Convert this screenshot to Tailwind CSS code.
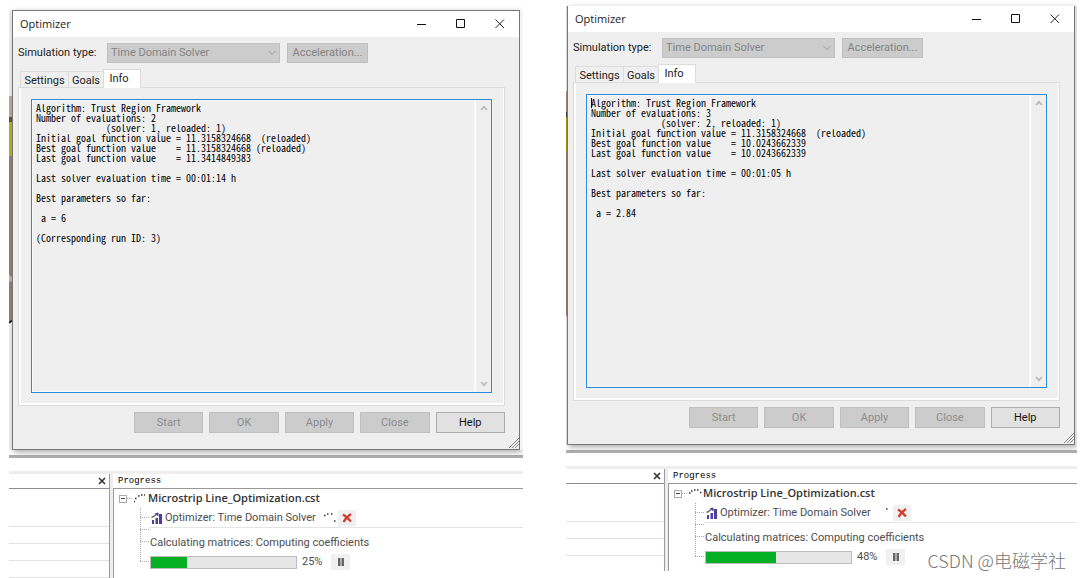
<!DOCTYPE html>
<html lang="en">
<head>
<meta charset="utf-8">
<title>Optimizer</title>
<script src="https://cdn.jsdelivr.net/npm/@tailwindcss/browser@4"></script>
</head>
<body class="min-h-screen bg-white font-[Roboto,'Noto_Sans_CJK_SC',sans-serif] text-[11px] text-[#222]">
<svg class="hidden" aria-hidden="true">
  <symbol id="min" viewBox="0 0 10 10"><path d="M0 5.5h9" stroke="#111" fill="none"/></symbol>
  <symbol id="max" viewBox="0 0 10 10"><path d="M.5 .5h8v8h-8z" stroke="#111" fill="none"/></symbol>
  <symbol id="close" viewBox="0 0 10 10"><path d="M.5 .5l8.500 8.500M9 .5L.5 9" stroke="#222" fill="none"/></symbol>
  <symbol id="up" viewBox="0 0 8 6"><path d="M1 5l3-3.200L7 5" stroke="#bbb" stroke-width="1.800" fill="none"/></symbol>
  <symbol id="down" viewBox="0 0 8 6"><path d="M1 1l3 3.200L7 1" stroke="#bbb" stroke-width="1.800" fill="none"/></symbol>
  <symbol id="chev" viewBox="0 0 8 6"><path d="M.5 1l3.500 3.500L7.500 1" stroke="#999" fill="none"/></symbol>
  <symbol id="grip" viewBox="0 0 10 10"><path d="M0 10L10 0M3 10l7-7M6 10l4-4" stroke="#888" fill="none"/></symbol>
  <symbol id="panex" viewBox="0 0 8 8"><path d="M1 1l6 6M7 1L1 7" stroke="#333" stroke-width="1.600" fill="none"/></symbol>
  <symbol id="redx" viewBox="0 0 10 10"><path d="M1 1.500Q5 4 9 8.500M9 1Q4 4 1.500 9" stroke="#d33a2c" stroke-width="2.200" fill="none"/></symbol>
  <symbol id="pause" viewBox="0 0 8 8"><path d="M1 0h2.500v8H1zM4.500 0h2.500v8H4.500z" fill="#666"/></symbol>
  <symbol id="chart" viewBox="0 0 12 12"><path d="M1 8h2v4H1zM4.500 6h2.500v6H4.500zM8 2h3v10H8z" fill="#4a3f9c"/><path d="M.5 5.500Q3 4.500 5 2.500" stroke="#666" stroke-width="1.500" fill="none"/><path d="M3.500 1.500L7.500 .5v4z" fill="#4a3f9c"/></symbol>
  <symbol id="tee" viewBox="0 0 9 20"><path d="M.5 0v20M0 9.500h9" stroke="#aaa" stroke-dasharray="1 1" fill="none"/></symbol>
  <symbol id="tee2" viewBox="0 0 9 24"><path d="M.5 0v24M0 1.500h9M0 13.500h9" stroke="#aaa" stroke-dasharray="1 1" fill="none"/></symbol>
  <symbol id="ell" viewBox="0 0 9 20"><path d="M.5 0v9.500M0 9.500h9" stroke="#aaa" stroke-dasharray="1 1" fill="none"/></symbol>
</svg>

<main class="grid grid-cols-[514fr_511fr] items-start gap-[43px] pl-[9px] pr-[3px]">

  <section class="overflow-hidden pt-[10px]" aria-label="First run">
    <div class="flex">
      <svg class="h-[440px] w-[3px] shrink-0" viewBox="0 0 3 440" aria-hidden="true"><path d="M0 0h3v440H0z" fill="#f0f0f0"/><path d="M0 86h3v21H0z" fill="#c5a6a2"/><path d="M0 107h3v5H0z" fill="#555"/><path d="M0 112h3v34H0z" fill="#b9b51c"/><path d="M0 146h3v165l-3 2z" fill="#93827e"/><path d="M0 265l3 2v5l-3-1z" fill="#d3a9a5"/><path d="M0 313l3-2.500" stroke="#000" stroke-width="1.500"/></svg>
      <div class="min-w-0 flex-1 border border-[#777] bg-[#efefef] shadow-[2px_2px_6px_rgba(0,0,0,0.35)]">
        <header class="flex h-[26px] items-center bg-white pl-[7px] pr-[14px]">
          <h1 class="flex-1 font-['Open_Sans',sans-serif] text-[11px]">Optimizer</h1>
          <div class="flex gap-[29px]">
            <button aria-label="Minimize"><svg class="size-[10px]"><use href="#min"/></svg></button>
            <button aria-label="Maximize"><svg class="size-[10px]"><use href="#max"/></svg></button>
            <button aria-label="Close window"><svg class="size-[10px]"><use href="#close"/></svg></button>
          </div>
        </header>
        <div class="pb-[15px] pl-[5px] pr-[14px] pt-[6px]">
          <div class="flex h-5 items-center">
            <label for="sim1" class="w-[89px] pt-px">Simulation type:</label>
            <div class="relative h-5 w-[173px]">
              <select id="sim1" disabled class="h-full w-full appearance-none border border-[#c0c0c0] bg-[#ccc] pl-[3px] pt-px text-[#838383] opacity-100"><option>Time Domain Solver</option></select>
              <svg class="absolute right-1 top-[7px] h-[6px] w-2"><use href="#chev"/></svg>
            </div>
            <button disabled class="ml-[7px] h-5 w-[81px] border border-[#bfbfbf] bg-[#ccc] pt-px text-[#838383]">Acceleration...</button>
          </div>
          <div class="relative z-10 -mb-px mt-[6px] flex items-end pl-[2px]" role="tablist">
            <button role="tab" class="h-[17px] w-[49px] border border-b-0 border-[#dcdcdc] pt-px leading-4">Settings</button>
            <button role="tab" class="h-[17px] w-[34px] border-t border-[#dcdcdc] pt-px leading-4">Goals</button>
            <button role="tab" aria-selected="true" class="h-[19px] w-[38px] border border-b-0 border-[#dcdcdc] bg-white pr-[6px] leading-4">Info</button>
          </div>
          <div class="border border-[#dcdcdc]">
            <div class="border-b-2 border-l-2 border-r border-white pb-[10px] pl-[10px] pr-[11px] pt-[11px]">
              <div class="flex h-[294px] border border-[#2e8bd8]">
                <textarea readonly aria-label="Optimizer info" class="min-w-0 flex-1 resize-none overflow-hidden whitespace-pre border border-[#f8f8f8] pl-[3px] pt-[2px] font-['Noto_Sans_Mono_CJK_SC','Liberation_Mono',monospace] text-[10px] leading-[10px] text-black outline-none">Algorithm: Trust Region Framework
Number of evaluations: 2
              (solver: 1, reloaded: 1)
Initial goal function value = 11.3158324668  (reloaded)
Best goal function value    = 11.3158324668 (reloaded)
Last goal function value    = 11.3414849383

Last solver evaluation time = 00:01:14 h

Best parameters so far:

 a = 6

(Corresponding run ID: 3)</textarea>
                <div class="flex w-4 flex-col items-center justify-between border-l border-white py-[5px]">
                  <button aria-label="Scroll up"><svg class="h-[6px] w-2"><use href="#up"/></svg></button>
                  <button aria-label="Scroll down"><svg class="h-[6px] w-2"><use href="#down"/></svg></button>
                </div>
              </div>
            </div>
          </div>
          <div class="ml-auto mt-[6px] grid w-[371px] grid-cols-5 gap-[6px]">
            <button disabled class="h-[21px] border border-[#bfbfbf] bg-[#ccc] pt-px text-[#8c8c8c]">Start</button>
            <button disabled class="h-[21px] border border-[#bfbfbf] bg-[#ccc] pt-px text-[#8c8c8c]">OK</button>
            <button disabled class="h-[21px] border border-[#bfbfbf] bg-[#ccc] pt-px text-[#8c8c8c]">Apply</button>
            <button disabled class="h-[21px] border border-[#bfbfbf] bg-[#ccc] pt-px text-[#8c8c8c]">Close</button>
            <button class="h-[21px] border border-[#adadad] bg-[#e1e1e1] pt-px text-[#111]">Help</button>
          </div>
        </div>
        <svg class="-mt-[10px] ml-auto size-[10px]"><use href="#grip"/></svg>
      </div>
      <div class="w-[3px] shrink-0 bg-[#f4f4f4]"></div>
    </div>
    <div class="mt-[5px] h-[3px] bg-[#b0b0b0]"></div>
    <div class="mt-[13px] h-[3px] bg-[#eee]"></div>
    <div class="flex">
      <aside class="w-[101px] border-r border-[#9a9aa4]" aria-label="Parameters">
        <div class="flex h-[14px] items-center justify-end pr-[3px]"><button aria-label="Close pane"><svg class="size-2"><use href="#panex"/></svg></button></div>
        <div class="border-t border-[#888c94]">
          <div class="h-[38px] border-b border-[#e2e2e2]"></div>
          <div class="h-[17px] border-b border-[#e2e2e2]"></div>
          <div class="h-[17px] border-b border-[#e2e2e2]"></div>
          <div class="h-[17px] border-b border-[#e2e2e2]"></div>
        </div>
      </aside>
      <div class="w-[3px] bg-[#eee]"></div>
      <section class="min-w-0 flex-1" aria-label="Progress">
        <h2 class="h-[14px] pl-[5px] font-['Liberation_Mono',monospace] text-[9px] leading-[15px] text-black">Progress</h2>
        <div class="border-l border-t border-[#999] pb-2 text-[#4d4d4d]">
          <div class="flex h-[19px] items-center pl-[5px]">
            <button aria-label="Collapse" class="grid size-[8px] place-items-center border border-[#aaa]"><span class="h-px w-1 bg-[#444]"></span></button>
            <span class="w-[5px] border-t border-dotted border-[#aaa]"></span>
            <svg class="h-[12px] w-[16px]" viewBox="0 0 16 12" aria-hidden="true"><path d="M2 8.500h1M3 5.500h1.500M6 3h1.500M9 2h1.500M12 2h1" stroke="#333" stroke-width="1.500"/></svg>
            <strong class="font-['Open_Sans',sans-serif] font-semibold text-[#333]">Microstrip Line_Optimization.cst</strong>
          </div>
          <div class="flex h-5 items-center pl-[26px]">
            <svg class="h-5 w-[9px] shrink-0"><use href="#tee"/></svg>
            <div class="flex h-full min-w-0 flex-1 items-center border-b border-[#e4e4e4] pl-[2px]">
              <svg class="size-3"><use href="#chart"/></svg>
              <span class="ml-[2px] w-[158px] whitespace-nowrap pt-[2px]">Optimizer: Time Domain Solver</span>
              <svg class="h-[12px] w-[15px]" viewBox="0 0 15 12" aria-hidden="true"><path d="M1 3.500h1.500M4 2h1.500M8 2h1.500M11 9h1.500" stroke="#333" stroke-width="1.500"/></svg>
              <button aria-label="Cancel" class="grid h-4 w-[18px] place-items-center bg-[#f0f0f0]"><svg class="size-[10px]"><use href="#redx"/></svg></button>
            </div>
          </div>
          <div class="flex h-6 items-center pl-[26px]">
            <svg class="h-6 w-[9px] shrink-0"><use href="#tee2"/></svg>
            <span class="whitespace-nowrap pl-px pt-[6px]">Calculating matrices: Computing coefficients</span>
          </div>
          <div class="flex h-5 items-center pl-[26px]">
            <svg class="h-5 w-[9px] shrink-0"><use href="#ell"/></svg>
            <div role="progressbar" aria-valuenow="25" aria-label="Run progress" class="ml-px h-[13px] w-[147px] border border-[#bcbcbc] bg-[#e6e6e6]"><div class="h-full bg-[#06b025]" style="width:25%"></div></div>
            <span class="ml-[5px] w-[29px] pt-px">25%</span>
            <button aria-label="Pause" class="grid h-4 w-[19px] place-items-center bg-[#f0f0f0]"><svg class="size-2"><use href="#pause"/></svg></button>
          </div>
        </div>
      </section>
    </div>
  </section>

  <section class="overflow-hidden pt-[6px]" aria-label="Second run">
    <div class="flex">
      <svg class="h-[439px] w-px shrink-0" viewBox="0 0 1 439" aria-hidden="true"><path d="M0 0h1v439H0z" fill="#e8e8e8"/><path d="M0 85h1v21H0z" fill="#a58c88"/><path d="M0 106h1v5H0z" fill="#444"/><path d="M0 111h1v34H0z" fill="#a09c18"/><path d="M0 145h1v165H0z" fill="#93827e"/></svg>
      <div class="min-w-0 flex-1 border border-t-0 border-[#777] bg-[#efefef] shadow-[2px_2px_6px_rgba(0,0,0,0.35)]">
        <header class="flex h-[26px] items-center bg-white pl-[7px] pr-[14px]">
          <h1 class="flex-1 font-['Open_Sans',sans-serif] text-[11px]">Optimizer</h1>
          <div class="flex gap-[29px]">
            <button aria-label="Minimize"><svg class="size-[10px]"><use href="#min"/></svg></button>
            <button aria-label="Maximize"><svg class="size-[10px]"><use href="#max"/></svg></button>
            <button aria-label="Close window"><svg class="size-[10px]"><use href="#close"/></svg></button>
          </div>
        </header>
        <div class="pb-[15px] pl-[5px] pr-[14px] pt-[6px]">
          <div class="flex h-5 items-center">
            <label for="sim2" class="w-[89px] pt-px">Simulation type:</label>
            <div class="relative h-5 w-[173px]">
              <select id="sim2" disabled class="h-full w-full appearance-none border border-[#c0c0c0] bg-[#ccc] pl-[3px] pt-px text-[#838383] opacity-100"><option>Time Domain Solver</option></select>
              <svg class="absolute right-1 top-[7px] h-[6px] w-2"><use href="#chev"/></svg>
            </div>
            <button disabled class="ml-[7px] h-5 w-[81px] border border-[#bfbfbf] bg-[#ccc] pt-px text-[#838383]">Acceleration...</button>
          </div>
          <div class="relative z-10 -mb-px mt-[6px] flex items-end pl-[2px]" role="tablist">
            <button role="tab" class="h-[17px] w-[49px] border border-b-0 border-[#dcdcdc] pt-px leading-4">Settings</button>
            <button role="tab" class="h-[17px] w-[34px] border-t border-[#dcdcdc] pt-px leading-4">Goals</button>
            <button role="tab" aria-selected="true" class="h-[19px] w-[38px] border border-b-0 border-[#dcdcdc] bg-white pr-[6px] leading-4">Info</button>
          </div>
          <div class="border border-[#dcdcdc]">
            <div class="border-b-2 border-l-2 border-r border-white pb-[10px] pl-[10px] pr-[11px] pt-[11px]">
              <div class="relative flex h-[294px] border border-[#2e8bd8]">
                <span class="absolute left-[4px] top-[3px] h-[10px] w-px bg-black" aria-hidden="true"></span>
                <textarea readonly aria-label="Optimizer info" class="min-w-0 flex-1 resize-none overflow-hidden whitespace-pre border border-[#f8f8f8] pl-[3px] pt-[2px] font-['Noto_Sans_Mono_CJK_SC','Liberation_Mono',monospace] text-[10px] leading-[10px] text-black outline-none">Algorithm: Trust Region Framework
Number of evaluations: 3
              (solver: 2, reloaded: 1)
Initial goal function value = 11.3158324668  (reloaded)
Best goal function value    = 10.0243662339
Last goal function value    = 10.0243662339

Last solver evaluation time = 00:01:05 h

Best parameters so far:

 a = 2.84</textarea>
                <div class="flex w-4 flex-col items-center justify-between border-l border-white py-[5px]">
                  <button aria-label="Scroll up"><svg class="h-[6px] w-2"><use href="#up"/></svg></button>
                  <button aria-label="Scroll down"><svg class="h-[6px] w-2"><use href="#down"/></svg></button>
                </div>
              </div>
            </div>
          </div>
          <div class="ml-auto mt-[6px] grid w-[371px] grid-cols-5 gap-[6px]">
            <button disabled class="h-[21px] border border-[#bfbfbf] bg-[#ccc] pt-px text-[#8c8c8c]">Start</button>
            <button disabled class="h-[21px] border border-[#bfbfbf] bg-[#ccc] pt-px text-[#8c8c8c]">OK</button>
            <button disabled class="h-[21px] border border-[#bfbfbf] bg-[#ccc] pt-px text-[#8c8c8c]">Apply</button>
            <button disabled class="h-[21px] border border-[#bfbfbf] bg-[#ccc] pt-px text-[#8c8c8c]">Close</button>
            <button class="h-[21px] border border-[#adadad] bg-[#e1e1e1] pt-px text-[#111]">Help</button>
          </div>
        </div>
        <svg class="-mt-[10px] ml-auto size-[10px]"><use href="#grip"/></svg>
      </div>
      <div class="w-[2px] shrink-0 bg-[#ddd]"></div>
    </div>
    <div class="mt-[5px] h-[3px] bg-[#b0b0b0]"></div>
    <div class="mt-[13px] h-[3px] bg-[#eee]"></div>
    <div class="flex">
      <aside class="w-[99px] border-r border-[#9a9aa4]" aria-label="Parameters">
        <div class="flex h-[14px] items-center justify-end pr-[3px]"><button aria-label="Close pane"><svg class="size-2"><use href="#panex"/></svg></button></div>
        <div class="border-t border-[#888c94]">
          <div class="h-[38px] border-b border-[#e2e2e2]"></div>
          <div class="h-[17px] border-b border-[#e2e2e2]"></div>
          <div class="h-[17px] border-b border-[#e2e2e2]"></div>
        </div>
      </aside>
      <div class="w-[3px] bg-[#eee]"></div>
      <section class="min-w-0 flex-1" aria-label="Progress">
        <h2 class="h-[14px] pl-[5px] font-['Liberation_Mono',monospace] text-[9px] leading-[15px] text-black">Progress</h2>
        <div class="border-l border-t border-[#999] pb-1 text-[#4d4d4d]">
          <div class="flex h-[19px] items-center pl-[5px]">
            <button aria-label="Collapse" class="grid size-[8px] place-items-center border border-[#aaa]"><span class="h-px w-1 bg-[#444]"></span></button>
            <span class="w-[5px] border-t border-dotted border-[#aaa]"></span>
            <svg class="h-[12px] w-[16px]" viewBox="0 0 16 12" aria-hidden="true"><path d="M2 5h1.500M4 3h1.500M7 2h1.500M10 2h1.500M13 4.500h1.500" stroke="#333" stroke-width="1.500"/></svg>
            <strong class="font-['Open_Sans',sans-serif] font-semibold text-[#333]">Microstrip Line_Optimization.cst</strong>
          </div>
          <div class="flex h-5 items-center pl-[26px]">
            <svg class="h-5 w-[9px] shrink-0"><use href="#tee"/></svg>
            <div class="flex h-full min-w-0 flex-1 items-center border-b border-[#e4e4e4] pl-[2px]">
              <svg class="size-3"><use href="#chart"/></svg>
              <span class="ml-[2px] w-[158px] whitespace-nowrap pt-[2px]">Optimizer: Time Domain Solver</span>
              <svg class="h-[12px] w-[15px]" viewBox="0 0 15 12" aria-hidden="true"><path d="M8 2h1.500" stroke="#333" stroke-width="1.500"/></svg>
              <button aria-label="Cancel" class="grid h-4 w-[18px] place-items-center bg-[#f0f0f0]"><svg class="size-[10px]"><use href="#redx"/></svg></button>
            </div>
          </div>
          <div class="flex h-6 items-center pl-[26px]">
            <svg class="h-6 w-[9px] shrink-0"><use href="#tee2"/></svg>
            <span class="whitespace-nowrap pl-px pt-[6px]">Calculating matrices: Computing coefficients</span>
          </div>
          <div class="flex h-5 items-center pl-[26px]">
            <svg class="h-5 w-[9px] shrink-0"><use href="#ell"/></svg>
            <div role="progressbar" aria-valuenow="48" aria-label="Run progress" class="ml-px h-[13px] w-[147px] border border-[#bcbcbc] bg-[#e6e6e6]"><div class="h-full bg-[#06b025]" style="width:48%"></div></div>
            <span class="ml-[5px] w-[29px] pt-px">48%</span>
            <button aria-label="Pause" class="grid h-4 w-[19px] place-items-center bg-[#f0f0f0]"><svg class="size-2"><use href="#pause"/></svg></button>
          </div>
        </div>
      </section>
    </div>
  </section>
</main>
<p class="absolute right-[14px] top-[547px] whitespace-nowrap font-['Noto_Sans_CJK_SC',sans-serif] text-[18px] font-light leading-[26px] text-[#777]">CSDN @电磁学社</p>
</body>
</html>
